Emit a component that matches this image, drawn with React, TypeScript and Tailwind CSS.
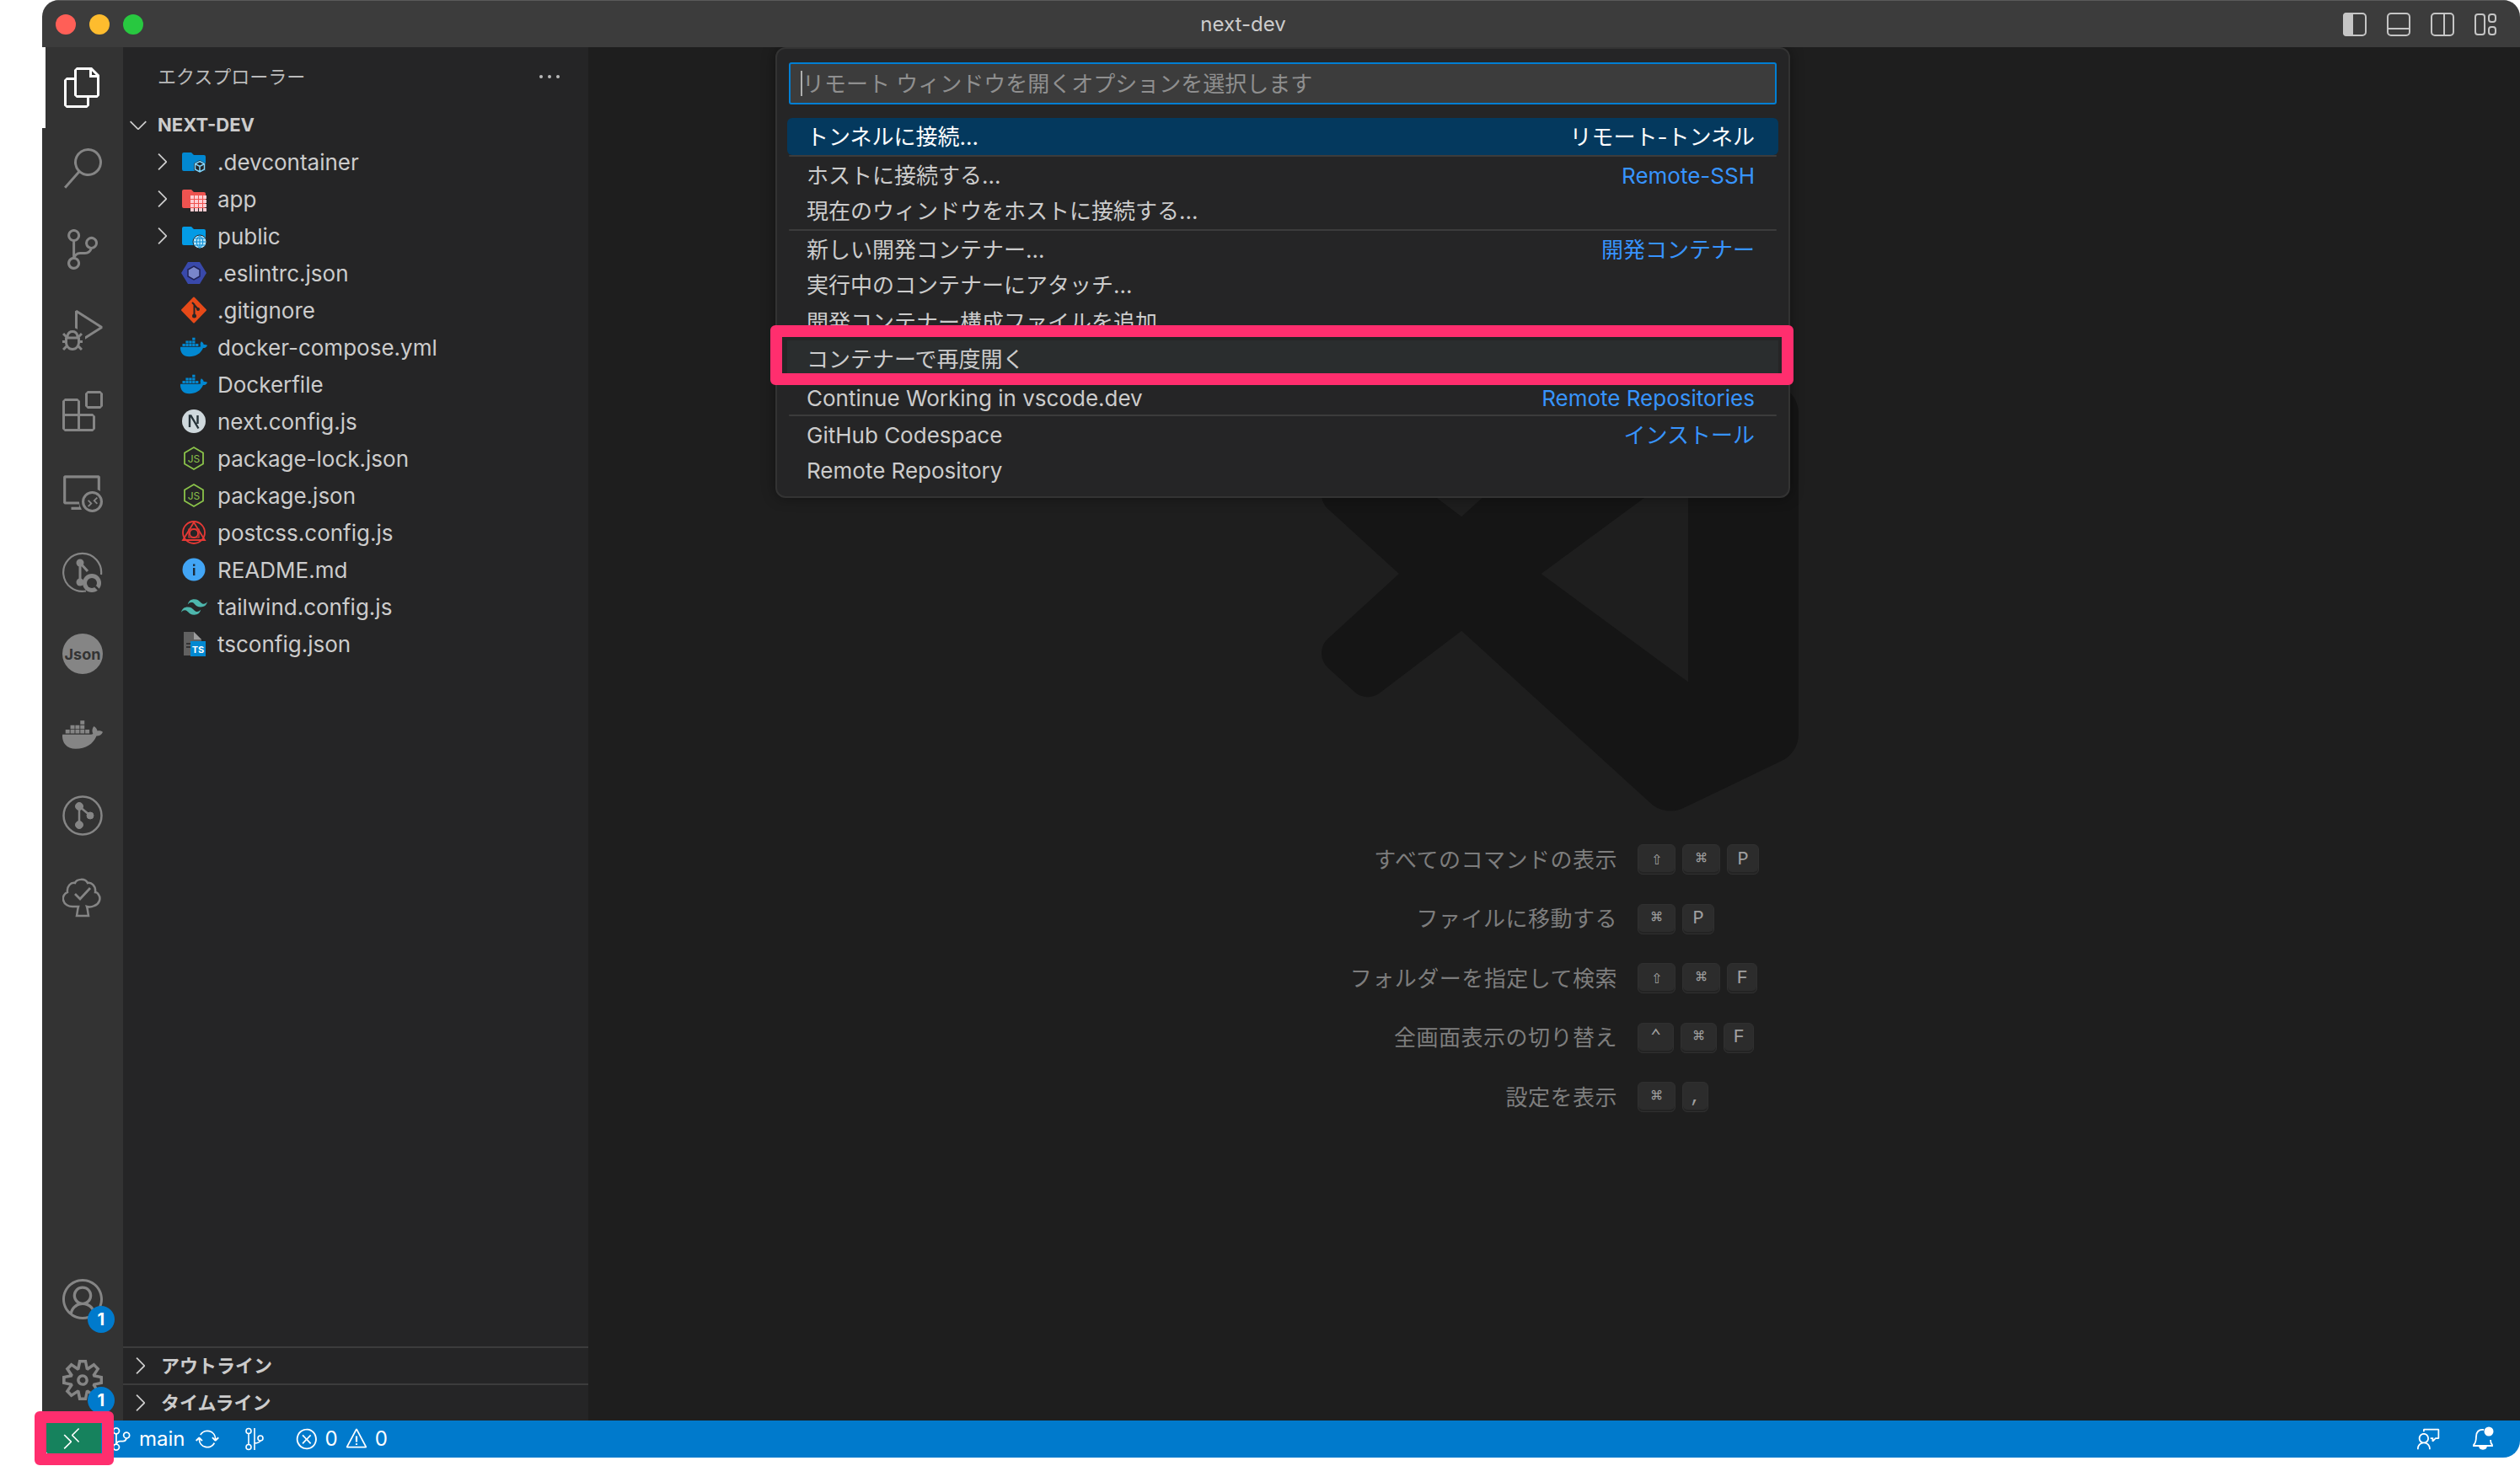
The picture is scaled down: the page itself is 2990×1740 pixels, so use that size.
import type { ReactNode } from "react";
import {
  VscAccount,
  VscChevronDown,
  VscChevronRight,
  VscDebugAlt,
  VscEllipsis,
  VscError,
  VscExtensions,
  VscFeedback,
  VscFiles,
  VscRemote,
  VscRemoteExplorer,
  VscSearch,
  VscSettingsGear,
  VscSourceControl,
  VscSync,
  VscWarning,
} from "react-icons/vsc";
import { FaDocker } from "react-icons/fa";
import { SiTailwindcss } from "react-icons/si";

const FOLDER = "M4 5h9l3 3h12a2 2 0 0 1 2 2v15a2 2 0 0 1-2 2H4a2 2 0 0 1-2-2V7a2 2 0 0 1 2-2z";

const Svg32 = ({ children }: { children: ReactNode }) => (
  <svg width="32" height="32" viewBox="0 0 32 32" fill="none" aria-hidden="true">
    {children}
  </svg>
);

const DevFolder = () => (
  <Svg32>
    <path d={FOLDER} fill="#0288d1" />
    <path d="M23 14l7 4v8l-7 4-7-4v-8z" fill="#252526" />
    <path d="M23 15.5l5.5 3v6.5l-5.5 3-5.5-3v-6.5zM17.5 18.5l5.5 3 5.5-3M23 21.5v6.5" stroke="#81d4fa" strokeWidth="1.5" />
  </Svg32>
);

const AppFolder = () => (
  <Svg32>
    <path d={FOLDER} fill="#ef5350" />
    <g fill="#ffcdd2">
      {[12, 17, 22, 27].map((y) =>
        [14, 19, 24, 29].map((x) => <rect key={`${x}-${y}`} x={x - 2} y={y} width="4" height="4" />)
      )}
    </g>
  </Svg32>
);

const PublicFolder = () => (
  <Svg32>
    <path d={FOLDER} fill="#039be5" />
    <circle cx="23" cy="23" r="8" fill="#b3e5fc" stroke="#252526" strokeWidth="1" />
    <path d="M15.5 23h15M16.5 19h13M16.5 27h13M23 15.5v15M23 15.5c-5 4-5 11 0 15M23 15.5c5 4 5 11 0 15" stroke="#0288d1" strokeWidth="1" />
  </Svg32>
);

const EslintIcon = () => (
  <Svg32>
    <path d="M9 3h14l8 13-8 13H9L1 16z" fill="#3949ab" />
    <path d="M16 8l7 4v8l-7 4-7-4v-8z" fill="#7986cb" stroke="#1f2255" strokeWidth="1.5" />
  </Svg32>
);

const GitIcon = () => (
  <Svg32>
    <path d="M16 1.5L30 16 16 30.5 2 16z" fill="#e64a19" stroke="#e64a19" strokeWidth="2" strokeLinejoin="round" />
    <path d="M14 7l2.5 2.5V22M16.5 10l4.5 5" stroke="#252526" strokeWidth="2" />
    <circle cx="16.5" cy="23" r="2.5" fill="#252526" />
    <circle cx="21" cy="15" r="2" fill="#252526" />
  </Svg32>
);

const NextIcon = () => (
  <Svg32>
    <circle cx="16" cy="16" r="14" fill="#cfd8dc" />
    <path d="M11 23V9.5h1.5l9 15M20.5 9v10" stroke="#263238" strokeWidth="2.4" />
  </Svg32>
);

const NodeIcon = () => (
  <Svg32>
    <path d="M16 3l11 6.5v13L16 29 5 22.5v-13z" stroke="#8bc34a" strokeWidth="1.8" />
    <text x="16" y="21" textAnchor="middle" fontSize="12" fill="#8bc34a" fontFamily="Inter, sans-serif">JS</text>
  </Svg32>
);

const PostcssIcon = () => (
  <Svg32>
    <circle cx="16" cy="16" r="13" stroke="#e53935" strokeWidth="1.8" />
    <path d="M16 4L29 25H3z" stroke="#e53935" strokeWidth="1.8" />
    <circle cx="16" cy="17" r="5" stroke="#e53935" strokeWidth="1.8" />
    <path d="M10 12h12v10H10z" stroke="#e53935" strokeWidth="1.2" />
  </Svg32>
);

const InfoIcon = () => (
  <Svg32>
    <circle cx="16" cy="16" r="13.5" fill="#42a5f5" />
    <rect x="15" y="14" width="2.4" height="9" fill="#1c2b3a" />
    <rect x="15" y="9.5" width="2.4" height="2.4" fill="#1c2b3a" />
  </Svg32>
);

const TsconfigIcon = () => (
  <Svg32>
    <path d="M4 2h12l9 9v19H4z" fill="#616161" />
    <path d="M16 2v9h9" fill="#9e9e9e" />
    <path d="M7 16h6M7 20h6" stroke="#252526" strokeWidth="1.5" />
    <rect x="12" y="13" width="18" height="18" fill="#0288d1" />
    <text x="21" y="27" textAnchor="middle" fontSize="11" fontWeight="700" fill="#fff" fontFamily="Inter, sans-serif">TS</text>
  </Svg32>
);

const DockerFile = () => <FaDocker size={32} color="#0288d1" />;
const TailwindFile = () => <SiTailwindcss size={31} color="#4db6ac" />;

const files: { name: string; icon: ReactNode; folder?: boolean }[] = [
  { name: ".devcontainer", icon: <DevFolder />, folder: true },
  { name: "app", icon: <AppFolder />, folder: true },
  { name: "public", icon: <PublicFolder />, folder: true },
  { name: ".eslintrc.json", icon: <EslintIcon /> },
  { name: ".gitignore", icon: <GitIcon /> },
  { name: "docker-compose.yml", icon: <DockerFile /> },
  { name: "Dockerfile", icon: <DockerFile /> },
  { name: "next.config.js", icon: <NextIcon /> },
  { name: "package-lock.json", icon: <NodeIcon /> },
  { name: "package.json", icon: <NodeIcon /> },
  { name: "postcss.config.js", icon: <PostcssIcon /> },
  { name: "README.md", icon: <InfoIcon /> },
  { name: "tailwind.config.js", icon: <TailwindFile /> },
  { name: "tsconfig.json", icon: <TsconfigIcon /> },
];

const GitlensIcon = () => (
  <svg width="48" height="50" viewBox="0 0 48 50" fill="none" stroke="#858585" aria-hidden="true">
    <path d="M28 46.5A22.5 22.5 0 1 1 46 27" strokeWidth="2.2" />
    <path d="M21 13v22M21 13l9 10" strokeWidth="3" />
    <circle cx="21" cy="13" r="4.5" fill="#858585" stroke="none" />
    <circle cx="21" cy="36" r="4.5" fill="#858585" stroke="none" />
    <circle cx="35" cy="37" r="11" fill="#858585" stroke="none" />
    <circle cx="35" cy="37" r="6" fill="#333333" stroke="none" />
    <path d="M39 41l4 4" stroke="#333333" strokeWidth="2.5" />
  </svg>
);

const JsonIcon = () => (
  <div className="flex h-12 w-12 items-center justify-center rounded-full bg-[#858585] text-[18px] font-bold text-[#333333]">
    Json
  </div>
);

const GitGraphIcon = () => (
  <svg width="48" height="48" viewBox="0 0 48 48" fill="none" stroke="#858585" aria-hidden="true">
    <circle cx="24" cy="24" r="22.5" strokeWidth="2.5" />
    <path d="M20 13v22M20 13l13 11" strokeWidth="2.5" />
    <circle cx="20" cy="13" r="4.5" fill="#858585" />
    <circle cx="20" cy="35" r="4.5" fill="#858585" />
    <circle cx="33" cy="24" r="4" fill="#858585" />
  </svg>
);

const TreeCheckIcon = () => (
  <svg width="48" height="50" viewBox="0 0 48 50" fill="none" stroke="#858585" strokeWidth="2.5" aria-hidden="true">
    <path d="M19 37c-1 3-1 6-2 11h14c-1-5-1-8-2-11 3 1 7 0 9-1 6-2 8-9 5-13-1-2-2-3-4-3 1-8-5-12-9-11-3-6-13-5-15 0-5-1-10 4-9 11-3 1-6 5-5 9 1 6 7 8 11 8 2 0 5 0 7 0z" />
    <path d="M15 22l6 6 12-13" strokeWidth="2.8" />
  </svg>
);

const Badge = () => (
  <span className="absolute left-[56%] top-[58%] flex h-8 w-8 items-center justify-center rounded-full bg-[#007acc] text-[20px] font-bold text-white">
    1
  </span>
);

const activityTop: ReactNode[] = [
  <VscSearch size={48} />,
  <VscSourceControl size={48} />,
  <VscDebugAlt size={48} />,
  <VscExtensions size={48} />,
  <VscRemoteExplorer size={48} />,
  <GitlensIcon />,
  <JsonIcon />,
  <FaDocker size={48} />,
  <GitGraphIcon />,
  <TreeCheckIcon />,
];

const ActivityBar = () => (
  <div className="flex w-24 shrink-0 flex-col justify-between bg-[#333333] text-[#858585]">
    <div>
      <div className="flex h-24 items-center justify-center border-l-4 border-white pr-1 text-white">
        <VscFiles size={48} />
      </div>
      {activityTop.map((icon, i) => (
        <div key={i} className="flex h-24 items-center justify-center">
          {icon}
        </div>
      ))}
    </div>
    <div>
      <div className="relative flex h-24 items-center justify-center">
        <VscAccount size={48} />
        <Badge />
      </div>
      <div className="relative flex h-24 items-center justify-center">
        <VscSettingsGear size={48} />
        <Badge />
      </div>
    </div>
  </div>
);

const SideSection = ({ title }: { title: string }) => (
  <div className="flex h-11 items-center border-t-2 border-[#3c3c3c] pl-1 text-[22px] font-bold text-[#cccccc]">
    <VscChevronRight size={32} className="shrink-0" />
    <span className="ml-[9px]">{title}</span>
  </div>
);

const Sidebar = () => (
  <div className="flex w-[552px] shrink-0 flex-col bg-[#252526] text-[#cccccc]">
    <div className="flex h-[70px] items-center justify-between pl-[41px] pr-[30px] text-[22px] text-[#bbbbbb]">
      <span>エクスプローラー</span>
      <VscEllipsis size={32} />
    </div>
    <div className="flex-1">
      <div className="flex h-11 items-center pl-[2px] text-[22px] font-bold">
        <VscChevronDown size={32} className="shrink-0" />
        <span className="ml-[7px]">NEXT-DEV</span>
      </div>
      {files.map((f) => (
        <div key={f.name} className="flex h-11 items-center pl-[30px] text-[26px]">
          <span className="flex w-8 shrink-0 items-center justify-center">
            {f.folder && <VscChevronRight size={32} />}
          </span>
          <span className="ml-[6px] flex w-8 shrink-0 items-center justify-center">{f.icon}</span>
          <span className="ml-[12px]">{f.name}</span>
        </div>
      ))}
    </div>
    <SideSection title="アウトライン" />
    <SideSection title="タイムライン" />
  </div>
);

const commands: { label: string; detail?: string; sep?: boolean; active?: boolean; hover?: boolean }[] = [
  { label: "トンネルに接続...", detail: "リモート-トンネル", active: true },
  { label: "ホストに接続する...", detail: "Remote-SSH", sep: true },
  { label: "現在のウィンドウをホストに接続する..." },
  { label: "新しい開発コンテナー...", detail: "開発コンテナー", sep: true },
  { label: "実行中のコンテナーにアタッチ..." },
  { label: "開発コンテナー構成ファイルを追加..." },
  { label: "コンテナーで再度開く", hover: true },
  { label: "Continue Working in vscode.dev", detail: "Remote Repositories", sep: true },
  { label: "GitHub Codespace", detail: "インストール", sep: true },
  { label: "Remote Repository" },
];

const RemotePicker = () => (
  <div className="absolute left-[222px] top-0 w-[1204px] rounded-xl border-2 border-[#333333] bg-[#252526] px-[12px] pb-[9px] pt-[16px] shadow-[0_0_16px_rgba(0,0,0,0.4)]">
    <div className="mx-[2px] flex h-[50px] items-center rounded-[3px] border-2 border-[#007fd4] bg-[#3c3c3c] pl-[12px] text-[26px] text-[#8f8f8f]">
      <span className="h-[30px] w-[2px] bg-[#aeafad]" />
      <span>リモート ウィンドウを開くオプションを選択します</span>
    </div>
    <div className="mt-[16px]">
      {commands.map((c) => (
        <div
          key={c.label}
          className={`flex h-11 items-center justify-between pl-[23px] pr-[28px] text-[26px] ${
            c.active
              ? "rounded-[6px] bg-[#04395e] text-white"
              : c.hover
                ? "bg-[#2a2d2e] text-[#cccccc]"
                : "text-[#cccccc]"
          } ${c.sep ? "relative pt-[5px]" : ""}`}
        >
          {c.sep && <span className="absolute inset-x-[2px] top-0 h-[2px] rounded bg-[#3c3c3c]" />}
          <span>{c.label}</span>
          {c.detail && <span className={c.active ? "text-white" : "text-[#3794ff]"}>{c.detail}</span>}
        </div>
      ))}
    </div>
  </div>
);

const shortcuts: { label: string; keys: { k: string; w: string }[] }[] = [
  { label: "すべてのコマンドの表示", keys: [{ k: "⇧", w: "w-[45px]" }, { k: "⌘", w: "w-[45px]" }, { k: "P", w: "w-[38px]" }] },
  { label: "ファイルに移動する", keys: [{ k: "⌘", w: "w-[45px]" }, { k: "P", w: "w-[38px]" }] },
  { label: "フォルダーを指定して検索", keys: [{ k: "⇧", w: "w-[45px]" }, { k: "⌘", w: "w-[45px]" }, { k: "F", w: "w-[36px]" }] },
  { label: "全画面表示の切り替え", keys: [{ k: "⌃", w: "w-[43px]" }, { k: "⌘", w: "w-[43px]" }, { k: "F", w: "w-[36px]" }] },
  { label: "設定を表示", keys: [{ k: "⌘", w: "w-[45px]" }, { k: ",", w: "w-[31px]" }] },
];

const Editor = () => (
  <div className="relative flex-1 overflow-hidden bg-[#1e1e1e]">
    <svg className="absolute left-[870px] top-[342px] h-[566px] w-[566px]" viewBox="0 0 24 24" aria-hidden="true">
      <path
        fill="#151515"
        fillRule="evenodd"
        d="M23.15 2.587L18.21.21a1.494 1.494 0 0 0-1.705.29l-9.46 8.63-4.12-3.128a.999.999 0 0 0-1.276.057L.327 7.261A1 1 0 0 0 .326 8.74L3.899 12 .326 15.26a1 1 0 0 0 .001 1.479L1.65 17.94a.999.999 0 0 0 1.276.057l4.12-3.128 9.46 8.63a1.492 1.492 0 0 0 1.704.29l4.942-2.377A1.5 1.5 0 0 0 24 20.06V3.939a1.5 1.5 0 0 0-.85-1.352zM18.45 17.45L11.05 12l7.4-5.45z"
      />
    </svg>
    <RemotePicker />
    <div className="relative ml-[661px] pt-[929px]">
      {shortcuts.map((s) => (
        <div key={s.label} className="flex h-[70.5px] items-center gap-6">
          <span className="w-[560px] text-right text-[26px] tracking-[0.5px] text-[#7d7d7d]">{s.label}</span>
          <div className="flex gap-2">
            {s.keys.map((key) => (
              <kbd
                key={key.k}
                className={`flex h-9 items-center justify-center rounded-[6px] border border-[#303030] bg-[#2c2c2c] text-[22px] text-[#a0a0a0] shadow-[inset_0_-2px_0_#232323] ${key.w}`}
              >
                {key.k}
              </kbd>
            ))}
          </div>
        </div>
      ))}
    </div>
  </div>
);

const LayoutIcons = () => (
  <div className="flex items-center gap-6 text-[#c5c5c5]">
    <svg width="28" height="28" viewBox="0 0 28 28" fill="none" stroke="currentColor" strokeWidth="2" aria-hidden="true">
      <rect x="1" y="1" width="26" height="26" rx="4" />
      <path d="M4 1h7v26H4a3 3 0 0 1-3-3V4a3 3 0 0 1 3-3z" fill="currentColor" />
    </svg>
    <svg width="28" height="28" viewBox="0 0 28 28" fill="none" stroke="currentColor" strokeWidth="2" aria-hidden="true">
      <rect x="1" y="1" width="26" height="26" rx="4" />
      <path d="M1 19h26" />
    </svg>
    <svg width="28" height="28" viewBox="0 0 28 28" fill="none" stroke="currentColor" strokeWidth="2" aria-hidden="true">
      <rect x="1" y="1" width="26" height="26" rx="4" />
      <path d="M16 1v26" />
    </svg>
    <svg width="26" height="26" viewBox="0 0 26 26" fill="none" stroke="currentColor" strokeWidth="2" aria-hidden="true">
      <rect x="1" y="1" width="11" height="24" rx="3" />
      <rect x="17" y="1" width="8" height="9" rx="3" />
      <rect x="17" y="16" width="8" height="9" rx="3" />
    </svg>
  </div>
);

const TitleBar = () => (
  <div className="relative flex h-14 shrink-0 items-center justify-between border-t border-[#5a5a5a] bg-[#3c3c3c] pl-[16px] pr-[28px]">
    <div className="flex gap-4">
      <span className="h-6 w-6 rounded-full bg-[#ff5f57]" />
      <span className="h-6 w-6 rounded-full bg-[#febc2e]" />
      <span className="h-6 w-6 rounded-full bg-[#28c840]" />
    </div>
    <span className="text-[24px] text-[#cccccc]">next-dev</span>
    <LayoutIcons />
  </div>
);

const StatusBar = () => (
  <div className="flex h-11 shrink-0 items-center justify-between bg-[#007acc] pr-[30px] text-[24px] text-white">
    <div className="flex h-full items-center">
      <div className="flex h-full w-[70px] items-center justify-center bg-[#16825d]">
        <VscRemote size={30} />
      </div>
      <VscSourceControl size={28} className="ml-[10px]" />
      <span className="ml-[7px]">main</span>
      <VscSync size={28} className="ml-[12px]" />
      <svg width="24" height="28" viewBox="0 0 24 28" fill="none" stroke="currentColor" strokeWidth="1.6" className="ml-[30px]" aria-hidden="true">
        <circle cx="5" cy="4.5" r="3" />
        <circle cx="5" cy="23.5" r="3" />
        <circle cx="19" cy="13" r="3" />
        <path d="M5 7.5v13M12 1v26M12 19c4 0 7-2 7-3" />
      </svg>
      <VscError size={28} className="ml-[36px]" />
      <span className="ml-[8px]">0</span>
      <VscWarning size={28} className="ml-[8px]" />
      <span className="ml-[8px]">0</span>
    </div>
    <div className="flex items-center gap-9">
      <VscFeedback size={28} />
      <svg width="28" height="30" viewBox="0 0 28 30" fill="none" stroke="currentColor" strokeWidth="1.8" aria-hidden="true">
        <path d="M15 4c-6-1-9 3-9 8 0 5-1 8-3 10v1h22v-1c-1-1-2-3-2-6" />
        <path d="M10 23c0 5 8 5 8 0" fill="currentColor" />
        <circle cx="21" cy="6" r="5.5" fill="currentColor" stroke="none" />
      </svg>
    </div>
  </div>
);

const App = () => {
  return (
    <div className="relative h-[1740px] w-[2990px] overflow-hidden bg-white [font-family:Inter,'Noto_Sans_CJK_JP','DejaVu_Sans',sans-serif]">
      <div className="ml-[50px] flex h-[1730px] w-[2940px] flex-col overflow-hidden rounded-[20px]">
        <TitleBar />
        <div className="flex min-h-0 flex-1">
          <ActivityBar />
          <Sidebar />
          <Editor />
        </div>
        <StatusBar />
      </div>
      {/* pink callouts drawn on top of the screenshot */}
      <div className="absolute left-[914px] top-[386px] h-[71px] w-[1214px] rounded-[6px] border-[14px] border-[#ff2e6e]" />
      <div className="absolute left-[41px] top-[1675px] h-[64px] w-[94px] rounded-[6px] border-[14px] border-[#ff2e6e]" />
    </div>
  );
};

export default App;
